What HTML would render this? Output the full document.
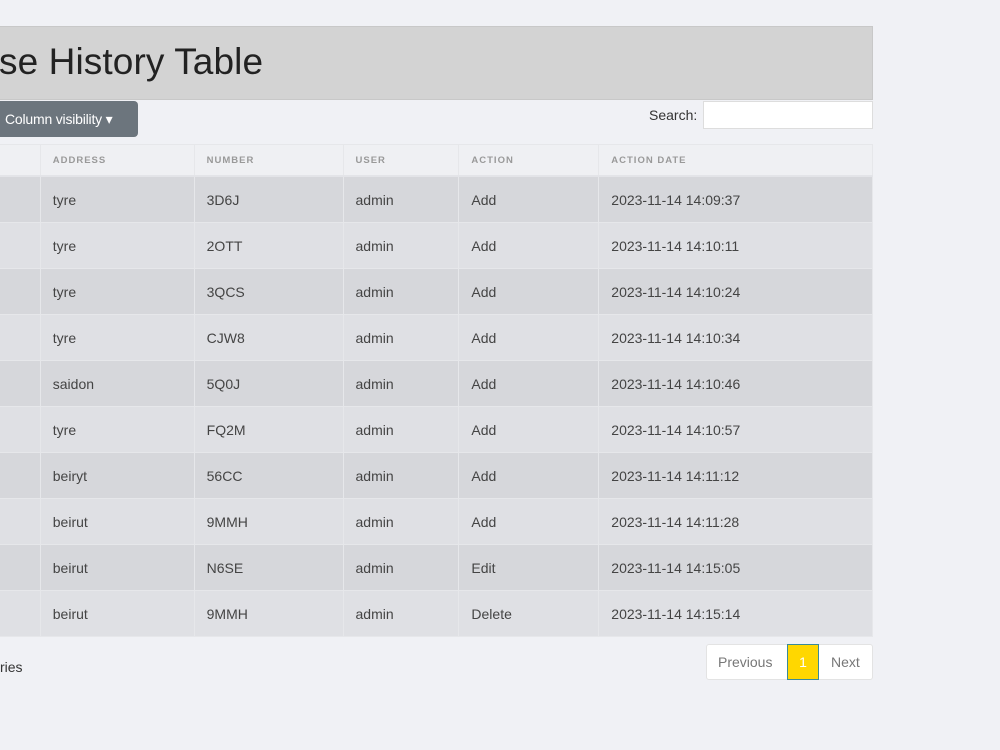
<!DOCTYPE html>
<html><head><style>
body{margin:0;width:1000px;height:750px;background:#f0f1f5;font-family:"Liberation Sans",sans-serif;position:relative;overflow:hidden;color:#444}
.a{position:absolute}
.hdr{left:0;top:26px;width:873px;height:74px;background:#d3d3d3;border:1px solid #c8c8c8;border-left:none;box-sizing:border-box}
.title{left:-1px;top:41px;font-size:37px;color:#222;letter-spacing:0.1px}
.btn{left:-10px;top:101px;width:148px;height:36px;background:#6c757d;border-radius:4px;color:#fff;font-size:14px;line-height:36px;text-align:left;padding-left:15px;box-sizing:border-box;letter-spacing:-0.2px}
table{position:absolute;left:-120px;top:144px;border-collapse:collapse;width:993px}
td,th{border:1px solid #e6e7ea;padding:0 12px;text-align:left;font-size:14px;color:#444}
th{height:30px;font-size:9.5px;letter-spacing:1px;color:#999;font-weight:bold;background:#eff0f3;border-bottom:2px solid #e3e4e8}
td{height:45px}
tr:nth-child(even) td{background:#d6d7db}
tr:nth-child(odd) td{background:#dfe0e4}
</style></head><body>
<div class="a hdr"></div>
<div class="a title">se History Table</div>
<div class="a btn">Column visibility ▾</div>
<div class="a" style="left:649px;top:107px;font-size:14px;color:#333">Search:</div>
<div class="a" style="left:703px;top:101px;width:170px;height:28px;background:#fff;border:1px solid #ddd;box-sizing:border-box"></div>
<table>
<colgroup><col style="width:160px"><col style="width:154px"><col style="width:149px"><col style="width:116px"><col style="width:140px"><col style="width:274px"></colgroup>
<tr><th></th><th>ADDRESS</th><th>NUMBER</th><th>USER</th><th>ACTION</th><th>ACTION DATE</th></tr>
<tr><td></td><td>tyre</td><td>3D6J</td><td>admin</td><td>Add</td><td>2023-11-14 14:09:37</td></tr>
<tr><td></td><td>tyre</td><td>2OTT</td><td>admin</td><td>Add</td><td>2023-11-14 14:10:11</td></tr>
<tr><td></td><td>tyre</td><td>3QCS</td><td>admin</td><td>Add</td><td>2023-11-14 14:10:24</td></tr>
<tr><td></td><td>tyre</td><td>CJW8</td><td>admin</td><td>Add</td><td>2023-11-14 14:10:34</td></tr>
<tr><td></td><td>saidon</td><td>5Q0J</td><td>admin</td><td>Add</td><td>2023-11-14 14:10:46</td></tr>
<tr><td></td><td>tyre</td><td>FQ2M</td><td>admin</td><td>Add</td><td>2023-11-14 14:10:57</td></tr>
<tr><td></td><td>beiryt</td><td>56CC</td><td>admin</td><td>Add</td><td>2023-11-14 14:11:12</td></tr>
<tr><td></td><td>beirut</td><td>9MMH</td><td>admin</td><td>Add</td><td>2023-11-14 14:11:28</td></tr>
<tr><td></td><td>beirut</td><td>N6SE</td><td>admin</td><td>Edit</td><td>2023-11-14 14:15:05</td></tr>
<tr><td></td><td>beirut</td><td>9MMH</td><td>admin</td><td>Delete</td><td>2023-11-14 14:15:14</td></tr>
</table>
<div class="a" style="left:0;top:659px;font-size:14px;color:#333">ries</div>
<div class="a" style="left:706px;top:644px;width:167px;height:36px;background:#fff;border:1px solid #e3e3e3;border-radius:3px;box-sizing:border-box"></div>
<div class="a" style="left:718px;top:654px;font-size:14px;color:#777">Previous</div>
<div class="a" style="left:787px;top:644px;width:32px;height:36px;background:#ffd700;border:1px solid #3a8a9a;box-sizing:border-box;color:#fff;font-size:14px;text-align:center;line-height:34px">1</div>
<div class="a" style="left:831px;top:654px;font-size:14px;color:#777">Next</div>
</body></html>
